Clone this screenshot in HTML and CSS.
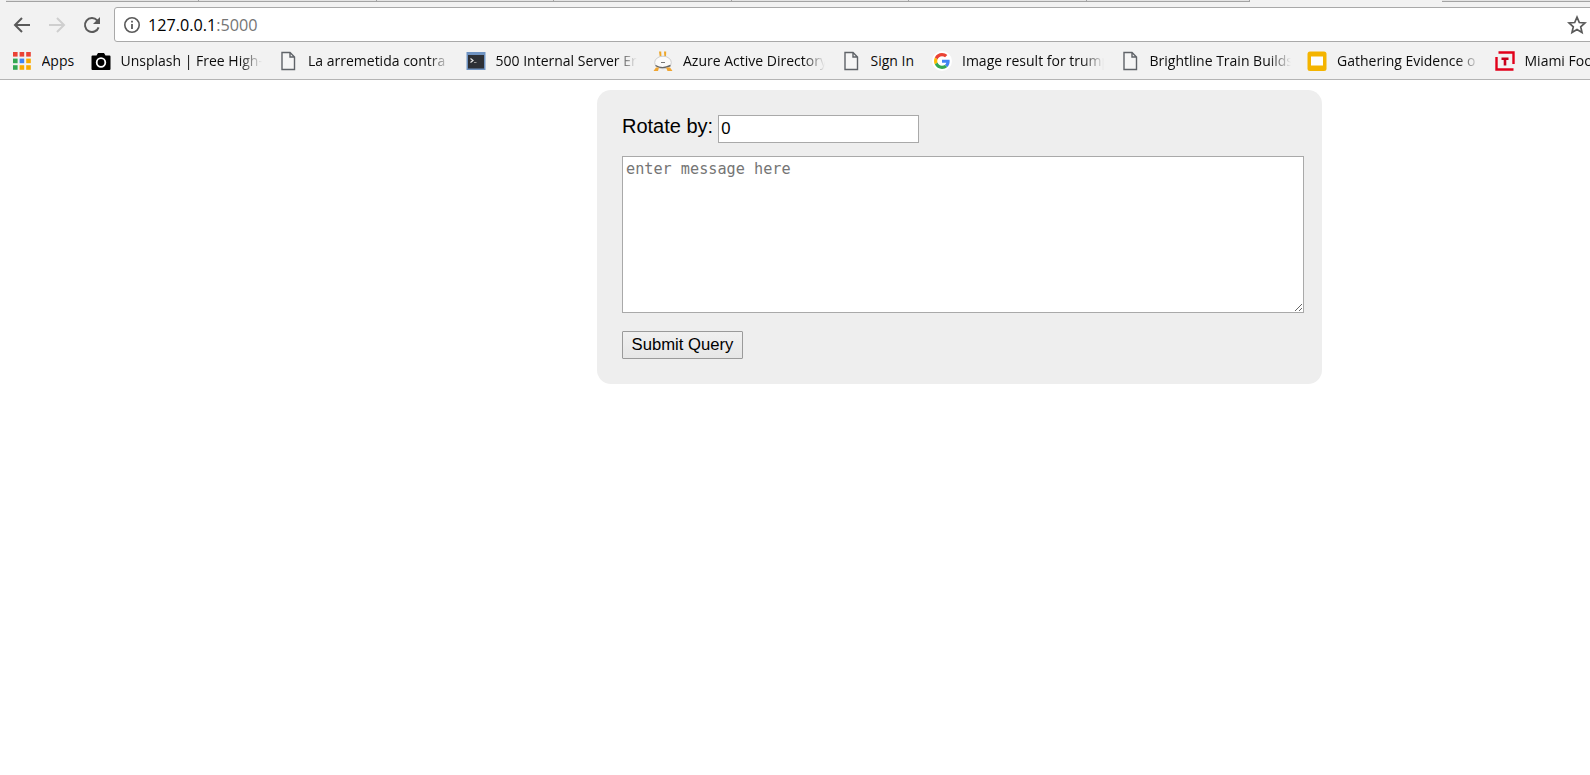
FILE: index.html
```html
<!DOCTYPE html>
<html lang="en">
<head>
<meta charset="utf-8">
<title>Caesar</title>
<link rel="stylesheet" href="styles.css">
</head>
<body>
<header class="chrome">
  <div class="tabs">
    <span class="tab tab-first"></span>
    <span class="tab tab-std"></span>
    <span class="tab tab-std"></span>
    <span class="tab tab-std"></span>
    <span class="tab tab-std"></span>
    <span class="tab tab-std"></span>
    <span class="tab tab-last"></span>
    <span class="tab-active"></span>
    <span class="tab tab-rest"></span>
  </div>
  <div class="toolbar">
    <svg class="nav" width="20" height="20" viewBox="0 0 20 20"><path d="M18 10H3M10 3l-7 7 7 7" fill="none" stroke="#5a5a5a" stroke-width="2"/></svg>
    <svg class="nav nav-fwd" width="20" height="20" viewBox="0 0 20 20"><path d="M2 10h15M10 3l7 7-7 7" fill="none" stroke="#cfcfcf" stroke-width="2"/></svg>
    <svg class="nav nav-reload" width="20" height="20" viewBox="0 0 20 20"><path d="M16.6 12.3a7 7 0 1 1-1.4-7L17 7" fill="none" stroke="#5a5a5a" stroke-width="2"/><path d="M18 2v7h-7z" fill="#5a5a5a"/></svg>
    <div class="omnibox">
      <svg class="info" width="18" height="18" viewBox="0 0 18 18"><circle cx="9" cy="9" r="7.2" fill="none" stroke="#5a5a5a" stroke-width="1.6"/><path d="M8.1 8h1.8v5H8.1zM8.1 4.8h1.8v1.8H8.1z" fill="#5a5a5a"/></svg>
      <span class="url">127.0.0.1<span class="port">:5000</span></span>
      <svg class="star" width="20" height="20" viewBox="0 0 20 20"><path d="M10 2.200l2.300 5.300 5.700.5-4.300 3.800 1.300 5.600-5-3-5 3 1.300-5.600L2 8l5.700-.5z" fill="none" stroke="#5a5a5a" stroke-width="1.700"/></svg>
    </div>
  </div>
  <nav class="bookmarks">
    <a class="bm bm-apps">
      <svg class="bm-icon" width="20" height="20" viewBox="0 0 20 20">
        <rect x="1" y="1" width="4.600" height="4.600" fill="#ea4335"/><rect x="7.600" y="1" width="4.600" height="4.600" fill="#ea4335"/><rect x="14.200" y="1" width="4.600" height="4.600" fill="#ea4335"/>
        <rect x="1" y="7.600" width="4.600" height="4.600" fill="#34a853"/><rect x="7.600" y="7.600" width="4.600" height="4.600" fill="#4285f4"/><rect x="14.200" y="7.600" width="4.600" height="4.600" fill="#f9ab00"/>
        <rect x="1" y="14.200" width="4.600" height="4.600" fill="#34a853"/><rect x="7.600" y="14.200" width="4.600" height="4.600" fill="#f9ab00"/><rect x="14.200" y="14.200" width="4.600" height="4.600" fill="#f9ab00"/>
      </svg>
      <span class="label label-apps">Apps</span>
    </a>
    <a class="bm">
      <svg class="bm-icon" width="20" height="20" viewBox="0 0 20 20"><path d="M1.500 4.500h4L7 2h6l1.500 2.500h4a1 1 0 0 1 1 1V18a1 1 0 0 1-1 1h-17a1 1 0 0 1-1-1V5.500a1 1 0 0 1 1-1z" fill="#000"/><circle cx="10" cy="11.500" r="4.300" fill="none" stroke="#fff" stroke-width="1.800"/></svg>
      <span class="label">Unsplash | Free High-</span>
    </a>
    <a class="bm">
      <svg class="bm-icon" width="20" height="20" viewBox="0 0 20 20"><path d="M4 1.500h8l4.500 4.500v12.500H4zM12 1.500V6h4.500" fill="#f5f5f5" stroke="#5f6368" stroke-width="1.400"/></svg>
      <span class="label">La arremetida contra</span>
    </a>
    <a class="bm">
      <svg class="bm-icon" width="20" height="20" viewBox="0 0 20 20"><rect x="0.500" y="1" width="19" height="18" fill="#6f93c2"/><rect x="2" y="4" width="16" height="13.500" fill="#2d3036"/><path d="M4.500 7.500l2.500 2-2.500 2" fill="none" stroke="#e8e8e8" stroke-width="1.200"/><path d="M8 11.500h2.500" stroke="#999" stroke-width="1"/></svg>
      <span class="label">500 Internal Server Er</span>
    </a>
    <a class="bm">
      <svg class="bm-icon" width="20" height="20" viewBox="0 0 20 20"><path d="M6 0.500h2.200l.3 5.500H6.800zM11 0.500h2.200L13 6h-1.600z" fill="#eda72b"/><ellipse cx="10" cy="11.500" rx="8.300" ry="6.300" fill="#fafafa" stroke="#cfcfcf" stroke-width="1"/><path d="M2.500 14.500c4 2.500 10 2.500 15 0" fill="none" stroke="#666" stroke-width="1.400"/><path d="M8 11.500h4" stroke="#777" stroke-width="1"/><path d="M0.500 20l2.500-3.500h3L5 20zM19.500 20L17 16.500h-4l1.500 3.500z" fill="#f0a531"/></svg>
      <span class="label">Azure Active Directory</span>
    </a>
    <a class="bm">
      <svg class="bm-icon" width="20" height="20" viewBox="0 0 20 20"><path d="M4 1.500h8l4.500 4.500v12.500H4zM12 1.500V6h4.500" fill="#f5f5f5" stroke="#5f6368" stroke-width="1.400"/></svg>
      <span class="label label-sign">Sign In</span>
    </a>
    <a class="bm">
      <svg class="bm-icon" width="20" height="20" viewBox="0 0 20 20"><circle cx="10" cy="10" r="10" fill="#fff"/><g transform="translate(2 2) scale(.3333)"><path fill="#EA4335" d="M24 9.500c3.540 0 6.710 1.220 9.210 3.600l6.850-6.850C35.900 2.380 30.470 0 24 0 14.620 0 6.510 5.380 2.560 13.220l7.980 6.190C12.430 13.720 17.740 9.500 24 9.500z"/><path fill="#4285F4" d="M46.980 24.550c0-1.570-.15-3.090-.38-4.550H24v9.020h12.940c-.58 2.960-2.260 5.480-4.780 7.180l7.730 6c4.510-4.180 7.090-10.360 7.090-17.650z"/><path fill="#FBBC05" d="M10.530 28.590c-.48-1.450-.76-2.990-.76-4.590s.27-3.140.76-4.590l-7.980-6.190C.92 16.460 0 20.120 0 24c0 3.880.92 7.540 2.560 10.780l7.970-6.190z"/><path fill="#34A853" d="M24 48c6.480 0 11.930-2.130 15.890-5.810l-7.730-6c-2.150 1.450-4.920 2.300-8.160 2.300-6.260 0-11.570-4.220-13.470-9.910l-7.980 6.190C6.510 42.620 14.620 48 24 48z"/></g></svg>
      <span class="label">Image result for trump</span>
    </a>
    <a class="bm">
      <svg class="bm-icon" width="20" height="20" viewBox="0 0 20 20"><path d="M4 1.500h8l4.500 4.500v12.500H4zM12 1.500V6h4.500" fill="#f5f5f5" stroke="#5f6368" stroke-width="1.400"/></svg>
      <span class="label">Brightline Train Builds</span>
    </a>
    <a class="bm">
      <svg class="bm-icon" width="20" height="20" viewBox="0 0 20 20"><rect x="0.500" y="0.500" width="19" height="19.500" rx="2.500" fill="#f4b400"/><rect x="4" y="5.500" width="12" height="9" fill="#fdfdfd"/></svg>
      <span class="label">Gathering Evidence o</span>
    </a>
    <a class="bm">
      <svg class="bm-icon" width="20" height="20" viewBox="0 0 20 20"><path d="M3.500 1.500H18.500V13M1.500 6V18.500H18.500" fill="none" stroke="#e2001a" stroke-width="2.400"/><path d="M6.500 6.500h7v2.600h-2.200v5.400H8.700V9.100H6.500z" fill="#c8001a"/></svg>
      <span class="label">Miami Food Tours</span>
    </a>
  </nav>
</header>
<main class="page">
  <form class="card">
    <div class="rotate-row">
      <label class="rotate-label" for="rot">Rotate by:</label>
      <input class="rotate-input" id="rot" type="text" value="0">
    </div>
    <textarea class="message" placeholder="enter message here"></textarea>
    <button class="submit" type="button">Submit Query</button>
  </form>
</main>
</body>
</html>
```

FILE: styles.css
```css
* { box-sizing: border-box; }
html, body { margin: 0; height: 100%; overflow: hidden; background: #fff; }
body { font-family: "Liberation Sans", Arial, sans-serif; color: #000; }

.chrome { background: #f2f2f2; }

.tabs { display: flex; height: 2px; padding-left: 6px; }
.tab { height: 2px; background: #e4e4e4; border-bottom: 1px solid #a3a3a3; border-right: 1px solid #a3a3a3; }
.tab-first { width: 193px; }
.tab-std { width: 177.500px; }
.tab-last { width: 163px; }
.tab-active { width: 192px; }
.tab-rest { flex: 1; border-right: 0; }

.toolbar { display: flex; align-items: center; height: 40px; padding-top: 5px; }
.nav { flex: none; margin-left: 12px; margin-right: 15px; }
.nav-fwd { margin-left: 0; margin-right: 15px; }
.nav-reload { margin-left: 0; margin-right: 12px; }

.omnibox {
  flex: 1;
  display: flex;
  align-items: center;
  height: 35px;
  margin-right: -3px;
  padding-left: 8px;
  padding-right: 5px;
  background: #fff;
  border: 1px solid #a9a9a9;
  border-radius: 3px 0 0 3px;
}
.info { flex: none; margin-right: 7px; }
.url { flex: 1; font-family: "Open Sans", sans-serif; font-size: 16.200px; }
.port { color: #757575; }
.star { flex: none; }

.bookmarks {
  display: flex;
  align-items: center;
  height: 38px;
  padding-left: 11.500px;
  overflow: hidden;
  white-space: nowrap;
  border-bottom: 1px solid #b4b4b4;
}
.bm { display: flex; align-items: center; flex: none; margin-right: 16px; }
.bm-icon { flex: none; margin-right: 10px; }
.label {
  display: block;
  width: 141.500px;
  overflow: hidden;
  font-family: "Open Sans", sans-serif;
  font-size: 14px;
  line-height: 20px;
  color: #0c0c0c;
  -webkit-mask-image: linear-gradient(to right, #000 calc(100% - 22px), transparent);
  mask-image: linear-gradient(to right, #000 calc(100% - 22px), transparent);
}
.label-apps { width: 33px; -webkit-mask-image: none; mask-image: none; }
.label-sign { width: 45.500px; -webkit-mask-image: none; mask-image: none; }

.page { padding: 10px 0 0 597px; }
.card {
  width: 725px;
  height: 294px;
  padding: 25px 18px 0 25px;
  background: #eee;
  border-radius: 14px;
}
.rotate-row { display: flex; align-items: center; height: 28px; }
.rotate-label { font-size: 20px; margin-right: 5px; margin-bottom: 6px; }
.rotate-input {
  width: 201px;
  height: 28px;
  padding: 0 2px;
  font-family: "Liberation Sans", Arial, sans-serif;
  font-size: 16.667px;
  background: #fff;
  border: 1px solid #a9a9a9;
  border-radius: 0;
  outline: none;
}
.message {
  display: block;
  width: 682px;
  height: 157px;
  margin-top: 13px;
  padding: 2px 3px;
  font-family: "DejaVu Sans Mono", monospace;
  font-size: 15.200px;
  line-height: 20px;
  background: #fff;
  border: 1px solid #a9a9a9;
  border-radius: 0;
}
.message::placeholder { color: #757575; opacity: 1; }
.submit {
  display: block;
  width: 121px;
  height: 28px;
  margin-top: 18px;
  padding: 0;
  font-family: "Liberation Sans", Arial, sans-serif;
  font-size: 16.667px;
  color: #000;
  background: linear-gradient(#f0f0f0, #e6e6e6);
  border: 1px solid #9a9a9a;
  border-radius: 1px;
}
```
